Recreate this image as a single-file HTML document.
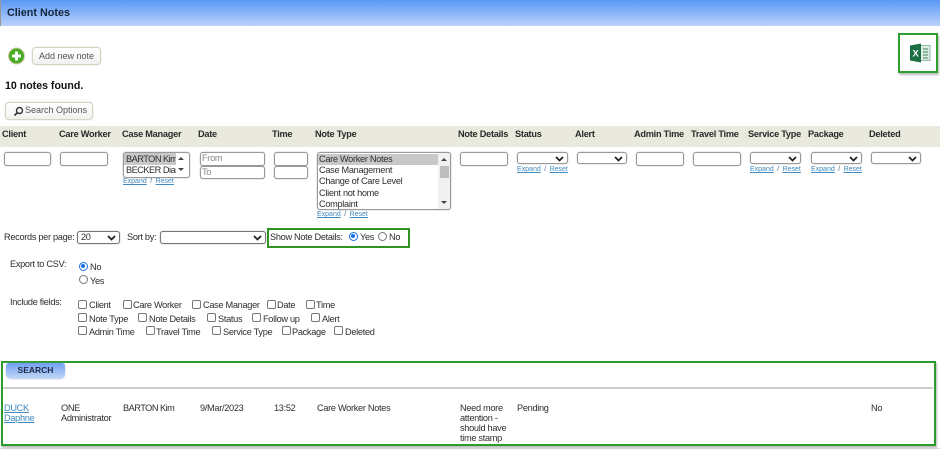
<!DOCTYPE html>
<html><head><meta charset="utf-8">
<style>
html,body{margin:0;padding:0;background:#fff}
body{width:940px;height:450px;position:relative;overflow:hidden;font-family:"Liberation Sans",sans-serif;font-size:9.2px;letter-spacing:-.3px;color:#2e2e2e;filter:blur(.3px)}
.t{position:absolute;white-space:nowrap;line-height:11px}
.b{font-weight:bold;letter-spacing:-.25px;color:#2a2a2a}
.i{position:absolute;box-sizing:border-box;background:#fff;border:1px solid #999;border-radius:3px;box-shadow:0 0 1px #888}
.s svg{position:absolute;right:3px;top:3px}
.a{position:absolute;white-space:nowrap;font-size:7px;letter-spacing:0;word-spacing:1.5px;line-height:8px;color:#4a6a88}
.a u{color:#3f8ac0}
.g{position:absolute;box-sizing:border-box;border:2px solid #2e9e2e;box-shadow:1px 2px 2px #bbb}
.r{position:absolute;width:9px;height:9px;box-sizing:border-box;border:1px solid #777;border-radius:50%;background:#fff}
.r.on{border:1.5px solid #1a73e8}
.r.on:after{content:"";position:absolute;left:1px;top:1px;width:4px;height:4px;border-radius:50%;background:#1a73e8}
.c{position:absolute;width:9px;height:9px;box-sizing:border-box;border:1px solid #777;border-radius:2px;background:#fff}
.btn{position:absolute;box-sizing:border-box;border:1px solid #d5d3c2;border-radius:4px;background:linear-gradient(#fff,#f1f1f0);box-shadow:0 0 1px #bbb;font-size:9px;letter-spacing:0;color:#555;white-space:nowrap}
</style></head><body>

<div style="position:absolute;left:0;top:0;width:940px;height:26px;background:linear-gradient(#5a98f6,#bad3fb);border-left:1px solid #999;box-sizing:border-box"></div>
<div class="t b" style="left:7px;top:8px;font-size:10.800px;letter-spacing:0;color:#16243a">Client Notes</div>

<svg style="position:absolute;left:8px;top:47px" width="18" height="18" viewBox="0 0 18 18"><circle cx="8.500" cy="9" r="8" fill="#45ac20" stroke="#d8c8a8"/><path d="M8.500 4.500v9M4 9h9" stroke="#fff" stroke-width="3"/></svg>
<div class="btn" style="left:32px;top:47px;width:69px;height:18px;line-height:16px;text-align:center">Add new note</div>
<div class="t b" style="left:5px;top:81px;font-size:10.600px;letter-spacing:0;color:#111">10 notes found.</div>
<div class="btn" style="left:5px;top:102px;width:88px;height:18px;line-height:15px;padding-left:19px"><svg style="position:absolute;left:7px;top:3px" width="11" height="11" viewBox="0 0 11 11"><circle cx="6.500" cy="4.500" r="3" fill="none" stroke="#333" stroke-width="1.400"/><path d="M4.500 6.500L1.500 9.500" stroke="#333" stroke-width="1.800"/></svg>Search Options</div>

<div class="g" style="left:898px;top:33px;width:40px;height:40px"></div>
<svg style="position:absolute;left:909px;top:43px" width="22" height="20" viewBox="0 0 22 20"><rect x="9" y="2.500" width="12" height="15" fill="#dfece4" stroke="#8fb8a0"/><path d="M14 6h5M14 9h5M14 12h5M14 15h5" stroke="#5d9a78" stroke-width="1.200"/><path d="M1 2.500L12 .5V19.500L1 17.500Z" fill="#1d6f42"/><text x="3.500" y="13.500" font-family="Liberation Sans" font-weight="bold" font-size="9.500" letter-spacing="0" fill="#fff">X</text></svg>

<div style="position:absolute;left:0;top:126px;width:940px;height:21px;background:#e9e9dd"></div>
<div class="t b" style="left:2px;top:129px">Client</div>
<div class="t b" style="left:59px;top:129px">Care Worker</div>
<div class="t b" style="left:122px;top:129px">Case Manager</div>
<div class="t b" style="left:198px;top:129px">Date</div>
<div class="t b" style="left:272px;top:129px">Time</div>
<div class="t b" style="left:315px;top:129px">Note Type</div>
<div class="t b" style="left:458px;top:129px">Note Details</div>
<div class="t b" style="left:515px;top:129px">Status</div>
<div class="t b" style="left:575px;top:129px">Alert</div>
<div class="t b" style="left:634px;top:129px">Admin Time</div>
<div class="t b" style="left:691px;top:129px">Travel Time</div>
<div class="t b" style="left:748px;top:129px">Service Type</div>
<div class="t b" style="left:808px;top:129px">Package</div>
<div class="t b" style="left:869px;top:129px">Deleted</div>

<div class="i" style="left:4px;top:152px;width:47px;height:14px"></div>
<div class="i" style="left:60px;top:152px;width:48px;height:14px"></div>

<div class="i" style="left:123px;top:152px;width:67px;height:26px;overflow:hidden">
<div style="position:absolute;left:0;top:0;width:52px;height:12px;background:#c8c8c8"></div>
<div class="t" style="left:2px;top:1px;width:50px;overflow:hidden;letter-spacing:-.5px">BARTON Kim</div>
<div class="t" style="left:2px;top:12px;width:50px;overflow:hidden;letter-spacing:-.5px">BECKER Diane</div>
<div style="position:absolute;right:5px;top:4px;border:3px solid transparent;border-bottom:3px solid #444;border-top:0"></div>
<div style="position:absolute;right:5px;top:15px;border:3px solid transparent;border-top:3px solid #444;border-bottom:0"></div>
</div>
<div class="a" style="left:123px;top:178px"><u>Expand</u> / <u>Reset</u></div>

<div class="i" style="left:200px;top:152px;width:65px;height:14px"></div>
<div class="t" style="left:202px;top:153px;color:#888">From</div>
<div class="i" style="left:200px;top:166px;width:65px;height:13px"></div>
<div class="t" style="left:202px;top:167px;color:#888">To</div>
<div class="i" style="left:274px;top:152px;width:34px;height:14px"></div>
<div class="i" style="left:274px;top:166px;width:34px;height:13px"></div>

<div class="i" style="left:317px;top:152px;width:134px;height:58px;overflow:hidden">
<div style="position:absolute;left:0;top:1px;width:120px;height:11px;background:#c8c8c8"></div>
<div class="t" style="left:1px;top:1px">Care Worker Notes</div>
<div class="t" style="left:1px;top:12px">Case Management</div>
<div class="t" style="left:1px;top:23px">Change of Care Level</div>
<div class="t" style="left:1px;top:35px">Client not home</div>
<div class="t" style="left:1px;top:46px">Complaint</div>
<div style="position:absolute;right:0;top:0;width:12px;height:56px;background:#f1f1f1"></div>
<div style="position:absolute;right:1px;top:13px;width:9px;height:12px;background:#bdbdbd"></div>
<div style="position:absolute;right:3px;top:5px;border:3px solid transparent;border-bottom:3px solid #444;border-top:0"></div>
<div style="position:absolute;right:3px;top:48px;border:3px solid transparent;border-top:3px solid #444;border-bottom:0"></div>
</div>
<div class="a" style="left:317px;top:211px"><u>Expand</u> / <u>Reset</u></div>

<div class="i" style="left:460px;top:152px;width:48px;height:14px"></div>

<div class="i s" style="left:517px;top:152px;width:51px;height:12px"><svg width="9" height="6" viewBox="0 0 9 6"><path d="M1 1l3.500 3.500L8 1" fill="none" stroke="#222" stroke-width="1.800"/></svg></div>
<div class="a" style="left:517px;top:166px"><u>Expand</u> / <u>Reset</u></div>
<div class="i s" style="left:577px;top:152px;width:50px;height:12px"><svg width="9" height="6" viewBox="0 0 9 6"><path d="M1 1l3.500 3.500L8 1" fill="none" stroke="#222" stroke-width="1.800"/></svg></div>

<div class="i" style="left:636px;top:152px;width:48px;height:14px"></div>
<div class="i" style="left:693px;top:152px;width:48px;height:14px"></div>

<div class="i s" style="left:750px;top:152px;width:51px;height:12px"><svg width="9" height="6" viewBox="0 0 9 6"><path d="M1 1l3.500 3.500L8 1" fill="none" stroke="#222" stroke-width="1.800"/></svg></div>
<div class="a" style="left:750px;top:166px"><u>Expand</u> / <u>Reset</u></div>
<div class="i s" style="left:811px;top:152px;width:51px;height:12px"><svg width="9" height="6" viewBox="0 0 9 6"><path d="M1 1l3.500 3.500L8 1" fill="none" stroke="#222" stroke-width="1.800"/></svg></div>
<div class="a" style="left:811px;top:166px"><u>Expand</u> / <u>Reset</u></div>
<div class="i s" style="left:871px;top:152px;width:50px;height:12px"><svg width="9" height="6" viewBox="0 0 9 6"><path d="M1 1l3.500 3.500L8 1" fill="none" stroke="#222" stroke-width="1.800"/></svg></div>

<div class="t" style="left:4px;top:232px">Records per page:</div>
<div class="i s" style="left:77px;top:231px;width:43px;height:13px;border-color:#777"><span class="t" style="left:3px;top:0">20</span><svg width="9" height="6" viewBox="0 0 9 6"><path d="M1 1l3.500 3.500L8 1" fill="none" stroke="#222" stroke-width="1.800"/></svg></div>
<div class="t" style="left:127px;top:232px">Sort by:</div>
<div class="i s" style="left:160px;top:231px;width:106px;height:13px;border-color:#777"><svg width="9" height="6" viewBox="0 0 9 6"><path d="M1 1l3.500 3.500L8 1" fill="none" stroke="#222" stroke-width="1.800"/></svg></div>

<div class="g" style="left:267px;top:228px;width:143px;height:20px;box-shadow:none;border-color:#2e9420"></div>
<div class="t" style="left:270px;top:232px">Show Note Details:</div>
<div class="r on" style="left:349px;top:232px"></div>
<div class="t" style="left:360px;top:232px">Yes</div>
<div class="r" style="left:378px;top:232px"></div>
<div class="t" style="left:389px;top:232px">No</div>

<div class="t" style="left:10px;top:259px">Export to CSV:</div>
<div class="r on" style="left:79px;top:262px"></div>
<div class="t" style="left:90px;top:262px">No</div>
<div class="r" style="left:79px;top:275px"></div>
<div class="t" style="left:90px;top:276px">Yes</div>

<div class="t" style="left:10px;top:297px">Include fields:</div>
<div class="c" style="left:78px;top:300px"></div><div class="t" style="left:89px;top:300px">Client</div>
<div class="c" style="left:123px;top:300px"></div><div class="t" style="left:133px;top:300px">Care Worker</div>
<div class="c" style="left:192px;top:300px"></div><div class="t" style="left:203px;top:300px">Case Manager</div>
<div class="c" style="left:267px;top:300px"></div><div class="t" style="left:277px;top:300px">Date</div>
<div class="c" style="left:306px;top:300px"></div><div class="t" style="left:316px;top:300px">Time</div>
<div class="c" style="left:78px;top:313px"></div><div class="t" style="left:89px;top:314px">Note Type</div>
<div class="c" style="left:138px;top:313px"></div><div class="t" style="left:149px;top:314px">Note Details</div>
<div class="c" style="left:207px;top:313px"></div><div class="t" style="left:218px;top:314px">Status</div>
<div class="c" style="left:252px;top:313px"></div><div class="t" style="left:263px;top:314px">Follow up</div>
<div class="c" style="left:311px;top:313px"></div><div class="t" style="left:322px;top:314px">Alert</div>
<div class="c" style="left:78px;top:326px"></div><div class="t" style="left:89px;top:327px">Admin Time</div>
<div class="c" style="left:146px;top:326px"></div><div class="t" style="left:156px;top:327px">Travel Time</div>
<div class="c" style="left:212px;top:326px"></div><div class="t" style="left:223px;top:327px">Service Type</div>
<div class="c" style="left:282px;top:326px"></div><div class="t" style="left:292px;top:327px">Package</div>
<div class="c" style="left:334px;top:326px"></div><div class="t" style="left:345px;top:327px">Deleted</div>

<div style="position:absolute;left:0;top:448px;width:940px;height:1px;background:#ddd"></div>
<div class="g" style="left:1px;top:361px;width:935px;height:85px;border-color:#2c9a2c"></div>
<div style="position:absolute;left:6px;top:363px;width:59px;height:16px;border-radius:3px 3px 5px 5px;background:linear-gradient(#6f9ff3,#c6d9f7);box-shadow:0 0 1px #999;font-weight:bold;font-size:8.500px;line-height:15px;letter-spacing:0;color:#1e2b44;text-align:center">SEARCH</div>
<div style="position:absolute;left:3px;top:387px;width:930px;height:2px;background:#ccc"></div>

<div class="t" style="left:4px;top:403px;line-height:10px;color:#3f8ac0;text-decoration:underline">DUCK<br>Daphne</div>
<div class="t" style="left:61px;top:403px;line-height:10px">ONE<br>Administrator</div>
<div class="t" style="left:123px;top:403px;line-height:10px;letter-spacing:-.5px">BARTON Kim</div>
<div class="t" style="left:200px;top:403px;line-height:10px">9/Mar/2023</div>
<div class="t" style="left:274px;top:403px;line-height:10px">13:52</div>
<div class="t" style="left:317px;top:403px;line-height:10px">Care Worker Notes</div>
<div class="t" style="left:460px;top:403px;line-height:10px">Need more<br>attention -<br>should have<br>time stamp</div>
<div class="t" style="left:517px;top:403px;line-height:10px">Pending</div>
<div class="t" style="left:871px;top:403px;line-height:10px">No</div>

</body></html>
